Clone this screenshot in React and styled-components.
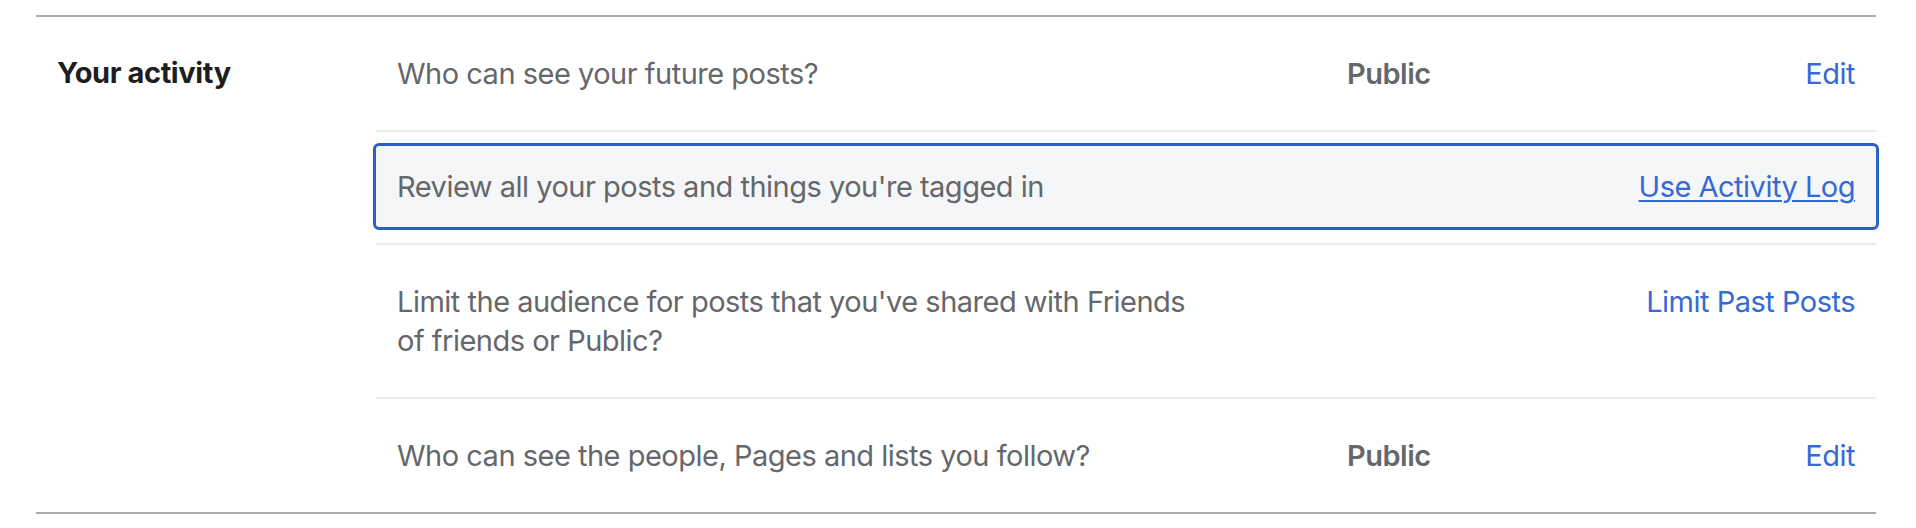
import React from 'react';
import styled, { createGlobalStyle } from 'styled-components';

const GlobalStyle = createGlobalStyle`
  body {
    margin: 0;
    background: #ffffff;
    font-family: 'Inter', 'Liberation Sans', Arial, sans-serif;
  }
`;

const Page = styled.div`
  padding: 15px 40px 0 36px;
`;

const Section = styled.section`
  display: grid;
  grid-template-columns: 340px 1fr;
  border-top: 2px solid #ababab;
  border-bottom: 2px solid #ababab;
`;

const Label = styled.h2`
  margin: 0;
  padding: 36px 0 0 21px;
  font-size: 29px;
  line-height: 39px;
  font-weight: 700;
  color: #1c1e21;
  letter-spacing: -0.4px;
`;

const List = styled.div`
  display: flex;
  flex-direction: column;
`;

const Row = styled.div`
  padding: ${(p) => (p.$focused ? '11px 0 13px' : '37px 21px')};
  border-bottom: ${(p) => (p.$last ? 'none' : '2px solid #ebebef')};
`;

const Inner = styled.div`
  display: grid;
  grid-template-columns: 1fr 250px 258px;
  align-items: start;
  ${(p) =>
    p.$focused &&
    `
    margin: 0 -3px;
    padding: 21px;
    border: 3px solid #2a5fc7;
    border-radius: 6px;
    background: #f5f6f7;
  `}
`;

const Text = styled.div`
  font-size: 29px;
  line-height: 39px;
  color: #65676b;
  max-width: 810px;
  letter-spacing: -0.5px;
`;

const Value = styled.div`
  font-size: 29px;
  line-height: 39px;
  font-weight: 600;
  color: #65676b;
  letter-spacing: -0.5px;
`;

const Action = styled.a`
  justify-self: end;
  font-size: 29px;
  line-height: 39px;
  color: #356ad6;
  letter-spacing: -0.5px;
  text-decoration: ${(p) => (p.$underline ? 'underline' : 'none')};
  text-decoration-thickness: 2px;
  text-underline-offset: 3px;
  cursor: pointer;
`;

const rows = [
  { text: 'Who can see your future posts?', value: 'Public', action: 'Edit' },
  { text: "Review all your posts and things you're tagged in", action: 'Use Activity Log', focused: true },
  { text: "Limit the audience for posts that you've shared with Friends of friends or Public?", action: 'Limit Past Posts' },
  { text: 'Who can see the people, Pages and lists you follow?', value: 'Public', action: 'Edit' },
];

export default function App() {
  return (
    <>
      <GlobalStyle />
      <Page>
        <Section>
          <Label>Your activity</Label>
          <List>
            {rows.map((r, i) => (
              <Row key={i} $focused={r.focused} $last={i === rows.length - 1}>
                <Inner $focused={r.focused}>
                  <Text>{r.text}</Text>
                  <Value>{r.value}</Value>
                  <Action $underline={r.focused}>{r.action}</Action>
                </Inner>
              </Row>
            ))}
          </List>
        </Section>
      </Page>
    </>
  );
}
